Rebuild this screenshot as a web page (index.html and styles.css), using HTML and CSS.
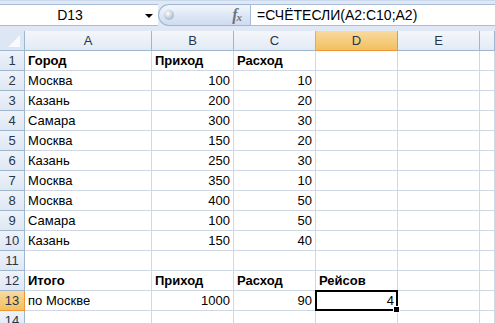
FILE: index.html
```html
<!DOCTYPE html>
<html lang="ru">
<head>
  <meta charset="UTF-8">
  <title>СЧЁТЕСЛИ</title>
  <link rel="stylesheet" href="styles.css">
</head>
<body>

  <div class="formula-bar">
    <div class="name-box">
      <span class="cell-ref">D13</span>
      <span class="drop-arrow"></span>
    </div>
    <div class="fx-pill">
      <span class="knob"></span>
      <span class="fx">f<sub>x</sub></span>
    </div>
    <div class="formula">=СЧЁТЕСЛИ(A2:C10;A2)</div>
  </div>

  <div class="sheet">
    <div class="row head">
      <div class="rh corner"><span class="tri"></span></div>
      <div class="ch col-a">A</div>
      <div class="ch">B</div>
      <div class="ch">C</div>
      <div class="ch active">D</div>
      <div class="ch">E</div>
      <div class="ch col-f"></div>
    </div>

    <div class="row">
      <div class="rh">1</div>
      <div class="c col-a b">Город</div>
      <div class="c b">Приход</div>
      <div class="c b">Расход</div>
      <div class="c"></div><div class="c"></div><div class="c col-f"></div>
    </div>
    <div class="row">
      <div class="rh">2</div>
      <div class="c col-a">Москва</div><div class="c n">100</div><div class="c n">10</div>
      <div class="c"></div><div class="c"></div><div class="c col-f"></div>
    </div>
    <div class="row">
      <div class="rh">3</div>
      <div class="c col-a">Казань</div><div class="c n">200</div><div class="c n">20</div>
      <div class="c"></div><div class="c"></div><div class="c col-f"></div>
    </div>
    <div class="row">
      <div class="rh">4</div>
      <div class="c col-a">Самара</div><div class="c n">300</div><div class="c n">30</div>
      <div class="c"></div><div class="c"></div><div class="c col-f"></div>
    </div>
    <div class="row">
      <div class="rh">5</div>
      <div class="c col-a">Москва</div><div class="c n">150</div><div class="c n">20</div>
      <div class="c"></div><div class="c"></div><div class="c col-f"></div>
    </div>
    <div class="row">
      <div class="rh">6</div>
      <div class="c col-a">Казань</div><div class="c n">250</div><div class="c n">30</div>
      <div class="c"></div><div class="c"></div><div class="c col-f"></div>
    </div>
    <div class="row">
      <div class="rh">7</div>
      <div class="c col-a">Москва</div><div class="c n">350</div><div class="c n">10</div>
      <div class="c"></div><div class="c"></div><div class="c col-f"></div>
    </div>
    <div class="row">
      <div class="rh">8</div>
      <div class="c col-a">Москва</div><div class="c n">400</div><div class="c n">50</div>
      <div class="c"></div><div class="c"></div><div class="c col-f"></div>
    </div>
    <div class="row">
      <div class="rh">9</div>
      <div class="c col-a">Самара</div><div class="c n">100</div><div class="c n">50</div>
      <div class="c"></div><div class="c"></div><div class="c col-f"></div>
    </div>
    <div class="row">
      <div class="rh">10</div>
      <div class="c col-a">Казань</div><div class="c n">150</div><div class="c n">40</div>
      <div class="c"></div><div class="c"></div><div class="c col-f"></div>
    </div>
    <div class="row">
      <div class="rh">11</div>
      <div class="c col-a"></div><div class="c"></div><div class="c"></div>
      <div class="c"></div><div class="c"></div><div class="c col-f"></div>
    </div>
    <div class="row">
      <div class="rh">12</div>
      <div class="c col-a b">Итого</div>
      <div class="c b">Приход</div>
      <div class="c b">Расход</div>
      <div class="c b">Рейсов</div>
      <div class="c"></div><div class="c col-f"></div>
    </div>
    <div class="row">
      <div class="rh active">13</div>
      <div class="c col-a">по Москве</div><div class="c n">1000</div><div class="c n">90</div>
      <div class="c n selected">4<span class="handle"></span></div>
      <div class="c"></div><div class="c col-f"></div>
    </div>
    <div class="row">
      <div class="rh">14</div>
      <div class="c col-a"></div><div class="c"></div><div class="c"></div>
      <div class="c"></div><div class="c"></div><div class="c col-f"></div>
    </div>
  </div>

</body>
</html>
```

FILE: styles.css
```css
body {
  margin: 0;
  font-family: "Liberation Sans", Arial, sans-serif;
  font-size: 13px;
  color: #000;
  background: #fff;
  overflow: hidden;
}

/* строка формул */
.formula-bar {
  display: flex;
  height: 31px;
  box-sizing: border-box;
  padding: 3px 0 5px;
  background: #dfe8f4;
  border-top: 1px solid #c9d8ea;
}

.name-box {
  position: relative;
  width: 158px;
  box-sizing: border-box;
  background: #fff;
  border-top: 1px solid #a6bcd8;
  border-bottom: 1px solid #a6bcd8;
  display: flex;
  align-items: center;
}

.cell-ref {
  width: 140px;
  text-align: center;
  font-size: 14px;
}

.drop-arrow {
  position: absolute;
  left: 145px;
  top: 9px;
  width: 0;
  height: 0;
  border-left: 4px solid transparent;
  border-right: 4px solid transparent;
  border-top: 4px solid #000;
}

.fx-pill {
  width: 92px;
  box-sizing: border-box;
  background: linear-gradient(#f3f7fc, #dce7f5 55%, #cfdcee);
  border: 1px solid #9fb6d5;
  border-right: none;
  border-radius: 11px 0 0 11px;
  display: flex;
  align-items: center;
  justify-content: space-between;
  padding: 0 9px 0 5px;
}

.knob {
  width: 10px;
  height: 10px;
  border-radius: 50%;
  background: radial-gradient(circle at 40% 35%, #ffffff, #b7c3d2 60%, #8f9eb2);
}

.fx {
  font-family: "Liberation Serif", serif;
  font-style: italic;
  font-weight: bold;
  font-size: 16px;
  color: #6c7480;
  letter-spacing: -1px;
}

.fx sub {
  font-size: 11px;
  vertical-align: baseline;
  position: relative;
  top: 1px;
}

.formula {
  flex: 1;
  background: #fff;
  border: 1px solid #a6bcd8;
  border-right: none;
  padding-left: 6px;
  font-size: 14px;
  display: flex;
  align-items: center;
}

/* лист */
.sheet {
  width: 495px;
  overflow: hidden;
}

.row {
  display: flex;
  height: 20px;
}

.rh {
  width: 25px;
  flex: none;
  box-sizing: border-box;
  border-right: 1px solid #9eb6ce;
  border-bottom: 1px solid #9eb6ce;
  background: linear-gradient(#eef3fa, #dee7f3);
  color: #27364a;
  text-align: center;
  line-height: 19px;
  font-size: 13px;
}

.rh.active {
  background: linear-gradient(#f9d99f, #f1c15f);
  border-right-color: #f29536;
  border-bottom-color: #f29536;
}

.corner {
  position: relative;
  background: #dce6f4;
}

.tri {
  position: absolute;
  right: 4px;
  bottom: 3px;
  width: 0;
  height: 0;
  border-left: 12px solid transparent;
  border-bottom: 12px solid #fff;
  opacity: 0.8;
}

.ch {
  width: 82px;
  flex: none;
  box-sizing: border-box;
  border-right: 1px solid #9eb6ce;
  border-bottom: 1px solid #9eb6ce;
  background: linear-gradient(#f4f7fb, #e3eaf4);
  color: #27364a;
  text-align: center;
  line-height: 19px;
  font-size: 13px;
}

.ch.active {
  background: linear-gradient(#f9d99f, #f1c15f);
  border-right-color: #f29536;
  border-bottom-color: #f29536;
}

.c {
  width: 82px;
  flex: none;
  box-sizing: border-box;
  border-right: 1px solid #d0d7e5;
  border-bottom: 1px solid #d0d7e5;
  padding: 0 3px;
  line-height: 20px;
  white-space: nowrap;
}

.col-a {
  width: 127px;
}

.col-f {
  width: 16px;
  flex: 1;
}

.b {
  font-weight: bold;
}

.n {
  text-align: right;
}

.selected {
  position: relative;
  border: 2px solid #000;
  margin: -1px 0 0 -1px;
  width: 83px;
  height: 21px;
  line-height: 17px;
  padding-right: 2px;
}

.handle {
  position: absolute;
  right: -4px;
  bottom: -4px;
  width: 5px;
  height: 5px;
  background: #000;
  border: 1px solid #fff;
}
```
